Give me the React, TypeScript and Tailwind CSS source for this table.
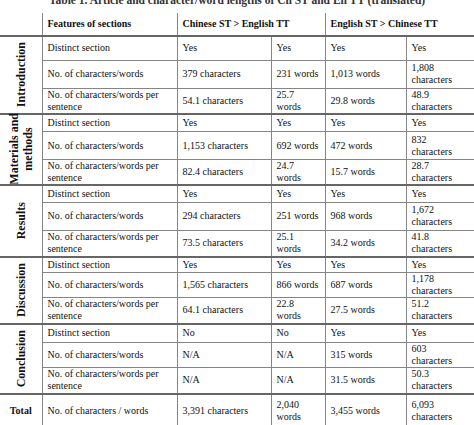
type Row = [string, string, string, string, string];

type Section = {
  name: string[];
  heights: number[];
  rows: Row[];
};

const sections: Section[] = [
  {
    name: ["Introduction"],
    heights: [24, 28, 23],
    rows: [
      ["Distinct section", "Yes", "Yes", "Yes", "Yes"],
      ["No. of characters/words", "379 characters", "231 words", "1,013 words", "1,808 characters"],
      ["No. of characters/words per sentence", "54.1 characters", "25.7 words", "29.8 words", "48.9 characters"],
    ],
  },
  {
    name: ["Materials and", "methods"],
    heights: [18, 28, 24],
    rows: [
      ["Distinct section", "Yes", "Yes", "Yes", "Yes"],
      ["No. of characters/words", "1,153 characters", "692 words", "472 words", "832 characters"],
      ["No. of characters/words per sentence", "82.4 characters", "24.7 words", "15.7 words", "28.7 characters"],
    ],
  },
  {
    name: ["Results"],
    heights: [17, 28, 27],
    rows: [
      ["Distinct section", "Yes", "Yes", "Yes", "Yes"],
      ["No. of characters/words", "294 characters", "251 words", "968 words", "1,672 characters"],
      ["No. of characters/words per sentence", "73.5 characters", "25.1 words", "34.2 words", "41.8 characters"],
    ],
  },
  {
    name: ["Discussion"],
    heights: [15, 24, 27],
    rows: [
      ["Distinct section", "Yes", "Yes", "Yes", "Yes"],
      ["No. of characters/words", "1,565 characters", "866 words", "687 words", "1,178 characters"],
      ["No. of characters/words per sentence", "64.1 characters", "22.8 words", "27.5 words", "51.2 characters"],
    ],
  },
  {
    name: ["Conclusion"],
    heights: [18, 25, 27],
    rows: [
      ["Distinct section", "No", "No", "Yes", "Yes"],
      ["No. of characters/words", "N/A", "N/A", "315 words", "603 characters"],
      ["No. of characters/words per sentence", "N/A", "N/A", "31.5 words", "50.3 characters"],
    ],
  },
];

const cell = "border border-[#858585] px-[5px] py-0 align-middle text-left";
const sectionTop = "border-t-2 border-t-[#666]";

export default function App() {
  return (
    <div className="w-[474px] h-[425px] overflow-hidden bg-white text-[#111] font-['Liberation_Serif','Times_New_Roman',serif] text-[10px] leading-[12px]">
      <div className="h-[13px] overflow-hidden flex justify-center">
        <div className="-mt-[7px] text-[11.5px] leading-[14px] font-bold whitespace-nowrap text-[#333]">
          Table 1. Article and character/word lengths of Ch ST and En TT (translated)
        </div>
      </div>
      <table className="w-[474px] table-fixed border-collapse border-hidden">
        <colgroup>
          <col className="w-[42px]" />
          <col className="w-[135px]" />
          <col className="w-[94px]" />
          <col className="w-[54px]" />
          <col className="w-[81px]" />
          <col className="w-[68px]" />
        </colgroup>
        <tbody>
          <tr className="h-[23px]">
            <td className={cell}></td>
            <td className={`${cell} font-bold`}>Features of sections</td>
            <td colSpan={2} className={`${cell} font-bold`}>
              Chinese ST &gt; English TT
            </td>
            <td colSpan={2} className={`${cell} font-bold`}>
              English ST &gt; Chinese TT
            </td>
          </tr>
          {sections.map((s) =>
            s.rows.map((r, i) => (
              <tr key={s.name[0] + i} style={{ height: s.heights[i] }}>
                {i === 0 && (
                  <td rowSpan={3} className={`border border-[#858585] ${sectionTop} p-0 align-middle`}>
                    <div className="h-0 flex justify-center items-center">
                      <div className="[writing-mode:vertical-rl] rotate-180 text-center font-bold text-[12px] leading-[14px] whitespace-nowrap">
                        {s.name.map((n) => (
                          <div key={n}>{n}</div>
                        ))}
                      </div>
                    </div>
                  </td>
                )}
                {r.map((c, j) => (
                  <td key={j} className={`${cell} ${i === 0 ? sectionTop : ""}`}>
                    {c}
                  </td>
                ))}
              </tr>
            ))
          )}
          <tr className="h-[32px]">
            <td className={`border border-[#858585] ${sectionTop} p-0 text-center align-middle font-bold`}>
              Total
            </td>
            {["No. of characters / words", "3,391 characters", "2,040 words", "3,455 words", "6,093 characters"].map(
              (c, j) => (
                <td key={j} className={`${cell} ${sectionTop}`}>
                  {c}
                </td>
              )
            )}
          </tr>
        </tbody>
      </table>
    </div>
  );
}
